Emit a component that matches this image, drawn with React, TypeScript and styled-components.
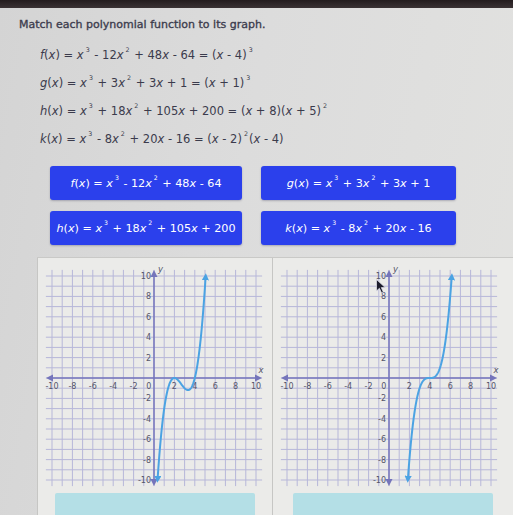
import styled, { createGlobalStyle } from "styled-components";
import { ReactNode } from "react";

const GlobalStyle = createGlobalStyle`
  html, body {
    margin: 0;
    padding: 0;
    background: #dadada;
  }
  body {
    font-family: "DejaVu Sans", Verdana, sans-serif;
  }
`;

// graph geometry (px inside the svg)
const U = 10.2;
const OX = 116;
const OY = 120;
const px = (x: number) => OX + x * U;
const py = (y: number) => OY - y * U;

const solve = (fn: (x: number) => number, a: number, b: number, t: number) => {
  let lo = a;
  let hi = b;
  for (let i = 0; i < 40; i++) {
    const m = (lo + hi) / 2;
    if ((fn(m) - t) * (fn(lo) - t) <= 0) hi = m;
    else lo = m;
  }
  return (lo + hi) / 2;
};

const k = (x: number) => (x - 2) * (x - 2) * (x - 4);
const f = (x: number) => Math.pow(x - 4, 3);

const ticks = Array.from({ length: 21 }, (_, i) => i - 10);
const labels = [-10, -8, -6, -4, -2, 2, 4, 6, 8, 10];

type GraphProps = {
  id: string;
  fn: (x: number) => number;
  bottom: [number, number];
  top: [number, number];
};

function Graph({ id, fn, bottom, top }: GraphProps) {
  const x0 = solve(fn, bottom[0], bottom[1], -10);
  const x1 = solve(fn, top[0], top[1], 10);
  const pts: string[] = [];
  const steps = 240;
  for (let i = 0; i <= steps; i++) {
    const x = x0 + ((x1 - x0) * i) / steps;
    pts.push(`${px(x).toFixed(2)},${py(fn(x)).toFixed(2)}`);
  }

  return (
    <GraphSvg width={232} height={232} viewBox="0 0 232 232">
      <defs>
        <marker id={`${id}-axis`} viewBox="0 0 10 10" refX="6" refY="5" markerWidth="5" markerHeight="5" orient="auto-start-reverse">
          <path d="M0,0 L10,5 L0,10 z" fill="#7575bb" />
        </marker>
        <marker id={`${id}-curve`} viewBox="0 0 10 10" refX="6" refY="5" markerWidth="3.6" markerHeight="3.6" orient="auto-start-reverse">
          <path d="M0,0 L10,5 L0,10 z" fill="#4ba3e3" />
        </marker>
      </defs>

      {ticks.map((t) => (
        <g key={t} stroke="#b7b7d9" strokeWidth={1}>
          <line x1={px(t)} y1={py(10.6)} x2={px(t)} y2={py(-10.6)} />
          <line x1={px(-10.6)} y1={py(t)} x2={px(10.6)} y2={py(t)} />
        </g>
      ))}

      <line x1={px(-10.3)} y1={OY} x2={px(10.3)} y2={OY} stroke="#7575bb" strokeWidth={1.5}
        markerStart={`url(#${id}-axis)`} markerEnd={`url(#${id}-axis)`} />
      <line x1={OX} y1={py(10.3)} x2={OX} y2={py(-10.3)} stroke="#7575bb" strokeWidth={1.5}
        markerStart={`url(#${id}-axis)`} markerEnd={`url(#${id}-axis)`} />

      <g fontSize="8" fill="#55556a" fontFamily="DejaVu Sans, sans-serif">
        {labels.map((v) => (
          <text key={`x${v}`} x={px(v)} y={OY + 11} textAnchor="middle">{v}</text>
        ))}
        <text x={px(-0.5)} y={OY + 11} textAnchor="middle">0</text>
        {labels.map((v) => (
          <text key={`y${v}`} x={OX - 3} y={py(v) + 3} textAnchor="end">{v}</text>
        ))}
        <text x={px(10.5)} y={OY - 5} textAnchor="middle" fontStyle="italic" fontSize="8.5">x</text>
        <text x={OX + 4} y={py(10.4)} fontStyle="italic" fontSize="8.5">y</text>
      </g>

      <polyline points={pts.join(" ")} fill="none" stroke="#4ba3e3" strokeWidth={2}
        strokeLinejoin="round" markerStart={`url(#${id}-curve)`} markerEnd={`url(#${id}-curve)`} />
    </GraphSvg>
  );
}

const V = ({ children }: { children: ReactNode }) => <Var>{children}</Var>;

export default function App() {
  return (
    <Page>
      <GlobalStyle />
      <TopBar />
      <Title>Match each polynomial function to its graph.</Title>

      <EquationList>
        <Equation>
          <V>f</V>(<V>x</V>) = <V>x</V><Sup>3</Sup> - 12<V>x</V><Sup>2</Sup> + 48<V>x</V> - 64 = (<V>x</V> - 4)<Sup>3</Sup>
        </Equation>
        <Equation>
          <V>g</V>(<V>x</V>) = <V>x</V><Sup>3</Sup> + 3<V>x</V><Sup>2</Sup> + 3<V>x</V> + 1 = (<V>x</V> + 1)<Sup>3</Sup>
        </Equation>
        <Equation>
          <V>h</V>(<V>x</V>) = <V>x</V><Sup>3</Sup> + 18<V>x</V><Sup>2</Sup> + 105<V>x</V> + 200 = (<V>x</V> + 8)(<V>x</V> + 5)<Sup>2</Sup>
        </Equation>
        <Equation>
          <V>k</V>(<V>x</V>) = <V>x</V><Sup>3</Sup> - 8<V>x</V><Sup>2</Sup> + 20<V>x</V> - 16 = (<V>x</V> - 2)<Sup>2</Sup>(<V>x</V> - 4)
        </Equation>
      </EquationList>

      <ChoiceGrid>
        <Choice>
          <V>f</V>(<V>x</V>) = <V>x</V><Sup>3</Sup> - 12<V>x</V><Sup>2</Sup> + 48<V>x</V> - 64
        </Choice>
        <Choice>
          <V>g</V>(<V>x</V>) = <V>x</V><Sup>3</Sup> + 3<V>x</V><Sup>2</Sup> + 3<V>x</V> + 1
        </Choice>
        <Choice>
          <V>h</V>(<V>x</V>) = <V>x</V><Sup>3</Sup> + 18<V>x</V><Sup>2</Sup> + 105<V>x</V> + 200
        </Choice>
        <Choice>
          <V>k</V>(<V>x</V>) = <V>x</V><Sup>3</Sup> - 8<V>x</V><Sup>2</Sup> + 20<V>x</V> - 16
        </Choice>
      </ChoiceGrid>

      <GraphRow>
        <GraphCell>
          <Graph id="g1" fn={k} bottom={[0, 1]} top={[4.2, 6]} />
          <DropZone />
        </GraphCell>
        <GraphCell>
          <Graph id="g2" fn={f} bottom={[1, 4]} top={[4, 7]} />
          <DropZone />
        </GraphCell>
      </GraphRow>

      <Cursor width="11" height="15" viewBox="0 0 11 15">
        <path d="M0.5,0.5 L0.5,12 L3.4,9.3 L5.6,14 L7.4,13.2 L5.3,8.6 L9.2,8.6 Z" fill="#1c1c2c" stroke="#e6e6ef" strokeWidth="0.7" />
      </Cursor>
    </Page>
  );
}

const Page = styled.div`
  position: relative;
  width: 513px;
  height: 515px;
  overflow: hidden;
  background: linear-gradient(100deg, #d4d4d4 0%, #dcdcdc 45%, #e2e2e0 100%);
  color: #3b3b4a;
`;

const TopBar = styled.div`
  height: 8px;
  background: linear-gradient(180deg, #231c1e, #3a3234);
`;

const Title = styled.div`
  margin: 10px 0 0 19px;
  font-size: 11px;
  line-height: 14px;
  font-weight: 400;
  -webkit-text-stroke: 0.35px #3d3d4e;
  color: #3d3d4e;
`;

const EquationList = styled.div`
  margin: 9px 0 0 40px;
  display: flex;
  flex-direction: column;
`;

const Equation = styled.div`
  height: 28px;
  display: flex;
  align-items: center;
  white-space: pre;
  font-size: 11.5px;
  color: #3b3b4c;
`;

const Var = styled.span`
  font-style: italic;
`;

const Sup = styled.span`
  font-size: 0.55em;
  position: relative;
  top: -0.9em;
  margin: 0 1px 0 2px;
`;

const ChoiceGrid = styled.div`
  display: grid;
  grid-template-columns: 192px 195px;
  grid-auto-rows: 34px;
  column-gap: 19px;
  row-gap: 11px;
  margin: 13px 0 0 50px;
`;

const Choice = styled.div`
  display: flex;
  align-items: center;
  justify-content: center;
  white-space: pre;
  background: #2b40ec;
  color: #ffffff;
  border-radius: 3px;
  font-size: 11.2px;
  box-shadow: 0 1px 2px rgba(20, 20, 60, 0.25);
`;

const GraphRow = styled.div`
  display: grid;
  grid-template-columns: 235px 1fr;
  margin: 12px 0 0 37px;
  border-top: 1px solid #c9c9c7;
`;

const GraphCell = styled.div`
  border-left: 1px solid #c6c6c4;
  background: #ebebe9;
  display: flex;
  flex-direction: column;
  padding-bottom: 20px;
`;

const GraphSvg = styled.svg`
  display: block;
  background: transparent;
`;

const DropZone = styled.div`
  align-self: center;
  width: 200px;
  height: 30px;
  margin-top: 3px;
  background: #b4dfe6;
  border-radius: 2px;
`;

const Cursor = styled.svg`
  position: absolute;
  left: 376px;
  top: 279px;
`;
